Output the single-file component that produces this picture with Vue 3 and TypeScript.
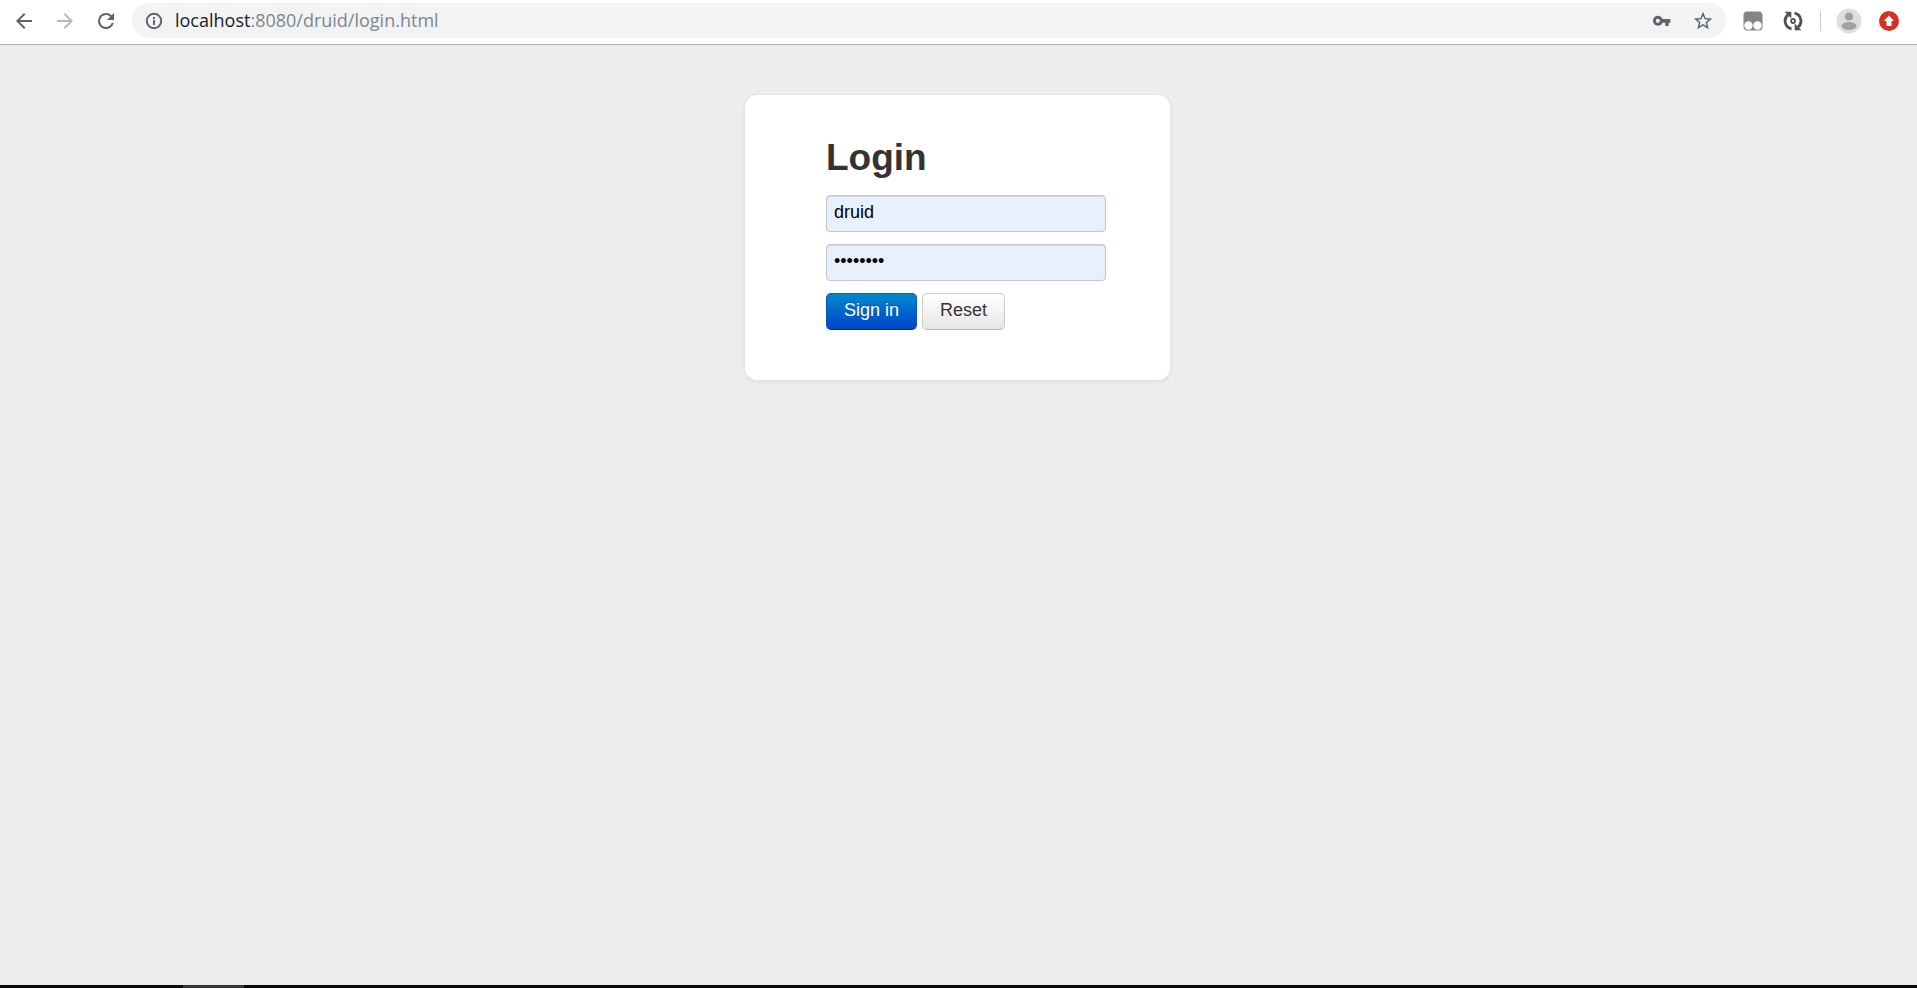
<script setup lang="ts">
import { ref } from 'vue'

const username = ref('druid')
const password = ref('password')

function reset(): void {
  username.value = ''
  password.value = ''
}
</script>

<template>
  <div class="window">
    <header class="toolbar">
      <nav class="nav">
        <button type="button" class="icon" aria-label="Back">
          <svg width="24" height="24" viewBox="0 0 24 24" fill="#5f6368"><path d="M20 11H7.800l5.600-5.600L12 4l-8 8 8 8 1.400-1.400L7.800 13H20z" /></svg>
        </button>
        <button type="button" class="icon" aria-label="Forward">
          <svg width="24" height="24" viewBox="0 0 24 24" fill="#bababa"><path d="M12 4l-1.400 1.400 5.600 5.600H4v2h12.200l-5.600 5.600L12 20l8-8z" /></svg>
        </button>
        <button type="button" class="icon" aria-label="Reload">
          <svg width="24" height="24" viewBox="0 0 24 24" fill="#5f6368"><path d="M17.650 6.350A7.960 7.960 0 0 0 12 4a8 8 0 1 0 7.730 10h-2.080A6 6 0 1 1 12 6c1.660 0 3.140.69 4.220 1.780L13 11h7V4z" /></svg>
        </button>
      </nav>
      <div class="omnibox">
        <svg width="20" height="20" viewBox="0 0 20 20" fill="none" stroke="#5f6368" stroke-width="2"><circle cx="10" cy="10" r="7.200" /><path d="M10 9v5M10 6v2" /></svg>
        <span class="url"><span class="host">localhost</span>:8080/druid/login.html</span>
        <button type="button" class="icon" aria-label="Saved passwords">
          <svg width="20" height="20" viewBox="0 0 24 24" fill="#5f6368"><path fill-rule="evenodd" d="M12.650 9.500A6 6 0 1 0 12.650 14H16v4h4v-4h2V9.500zM7 14.300a2.500 2.500 0 1 1 0-5 2.500 2.500 0 0 1 0 5z" /></svg>
        </button>
        <button type="button" class="icon" aria-label="Bookmark this page">
          <svg width="22" height="22" viewBox="0 0 24 24" fill="#5f6368"><path d="M22 9.240l-7.190-.62L12 2 9.190 8.630 2 9.240l5.460 4.730L5.820 21 12 17.270 18.180 21l-1.630-7.030zM12 15.400l-3.760 2.270 1-4.280-3.320-2.880 4.380-.38L12 6.100l1.710 4.040 4.380.38-3.320 2.880 1 4.280z" /></svg>
        </button>
      </div>
      <div class="extensions">
        <button type="button" class="icon" aria-label="User scripts">
          <svg width="20" height="20" viewBox="0 0 20 20"><rect x=".5" y=".5" width="19" height="19" rx="4" fill="#858585" /><circle cx="5.500" cy="14.500" r="4.200" fill="#fff" /><circle cx="14.500" cy="14.500" r="4.200" fill="#fff" /></svg>
        </button>
        <button type="button" class="icon" aria-label="Sync extension">
          <svg width="20" height="20" viewBox="0 0 20 20" fill="none" stroke="#505355" stroke-width="2.800"><path d="M8.500 17.800A8 8 0 0 1 5 3.800M11.500 2.200A8 8 0 0 1 15 16.200" /><path d="M1.500 .8h6.800v6.700zM18.500 19.200h-6.800v-6.700z" fill="#505355" stroke="none" /><circle cx="10" cy="10" r="2" stroke-width="1.800" /></svg>
        </button>
      </div>
      <div class="profile">
        <button type="button" class="icon" aria-label="Profile">
          <svg width="26" height="26" viewBox="0 0 26 26"><circle cx="13" cy="13" r="12.500" fill="#dedede" /><circle cx="13" cy="8.500" r="4" fill="#a0a0a0" /><ellipse cx="13" cy="18" rx="7.500" ry="4" fill="#a0a0a0" /></svg>
        </button>
        <button type="button" class="icon" aria-label="Update available">
          <svg width="20" height="20" viewBox="0 0 20 20"><circle cx="10" cy="10" r="10" fill="#d93025" /><path d="M10 4.500l5 5.500h-2.500v5h-5v-5H5z" fill="#fff" /></svg>
        </button>
      </div>
    </header>

    <main class="page">
      <form class="card" @submit.prevent @reset.prevent="reset">
        <h1>Login</h1>
        <input v-model="username" type="text" aria-label="Username" autocomplete="username">
        <input v-model="password" type="password" aria-label="Password" autocomplete="current-password">
        <div class="actions">
          <button type="submit" class="btn primary">Sign in</button>
          <button type="reset" class="btn">Reset</button>
        </div>
      </form>
    </main>

    <footer class="taskbar"><span class="task"></span></footer>
  </div>
</template>

<style>
body {
  margin: 0;
}
</style>

<style scoped>
* {
  box-sizing: border-box;
}

.window {
  display: flex;
  flex-direction: column;
  min-height: 100vh;
  background: #ededed;
  font-family: "Liberation Sans", Arial, sans-serif;
}

.toolbar {
  display: flex;
  align-items: center;
  padding: 3px 18px 6px 12px;
  background: #fff;
  border-bottom: 1px solid #b2b2b2;
}

.icon {
  display: flex;
  padding: 0;
  border: 0;
  background: none;
}

.nav {
  display: flex;
  gap: 17px;
  margin-right: 14px;
}

.omnibox {
  display: flex;
  flex: 1;
  align-items: center;
  gap: 20px;
  height: 35px;
  padding: 0 12px;
  border-radius: 18px;
  background: #f1f3f4;
}

.url {
  flex: 1;
  margin-left: -9px;
  padding-bottom: 2px;
  color: #80868b;
  font-family: "Open Sans", "Noto Sans", sans-serif;
  font-size: 18px;
  line-height: 24px;
}

.host {
  color: #202124;
}

.extensions {
  display: flex;
  gap: 20px;
  margin-left: 17px;
}

.profile {
  display: flex;
  align-items: center;
  gap: 17px;
  margin-left: 17px;
}

.profile::before {
  content: "";
  width: 1px;
  height: 20px;
  margin-right: -2px;
  background: #ccc;
}

.page {
  flex: 1;
  padding: 49px 22px 49px 20px;
}

.card {
  display: flex;
  flex-direction: column;
  gap: 12px;
  width: 427px;
  max-width: 100%;
  margin: 0 auto;
  padding: 37px 64px 50px 81px;
  border: 1px solid #e5e5e5;
  border-radius: 13px;
  background: #fff;
  box-shadow: 0 1px 3px rgba(0, 0, 0, 0.07);
}

h1 {
  margin: 0;
  color: #333;
  font-size: 37px;
  line-height: 51px;
}

input {
  width: 100%;
  height: 37px;
  padding: 4px 7px 6px;
  border: 1px solid #c4c8cc;
  border-radius: 4px;
  background: #e8f0fe;
  box-shadow: inset 0 1px 1px rgba(0, 0, 0, 0.1);
  color: #000;
  font-family: inherit;
  font-size: 18px;
}

.actions {
  display: flex;
  gap: 5px;
}

.btn {
  height: 37px;
  padding: 0 17px 2px;
  border: 1px solid #ccc;
  border-bottom-color: #b3b3b3;
  border-radius: 5px;
  background: linear-gradient(#fff, #e6e6e6);
  color: #333;
  font-family: inherit;
  font-size: 18px;
  text-shadow: 0 1px 1px rgba(255, 255, 255, 0.75);
}

.primary {
  border-color: #0462a8 #0357b5 #003299;
  background: linear-gradient(#0088cc, #0044cc);
  color: #fff;
  text-shadow: 0 -1px 0 rgba(0, 0, 0, 0.25);
}

.taskbar {
  display: flex;
  height: 3px;
  padding-left: 183px;
  background: #0c0a0a;
}

.task {
  width: 61px;
  background: #363636;
}
</style>
